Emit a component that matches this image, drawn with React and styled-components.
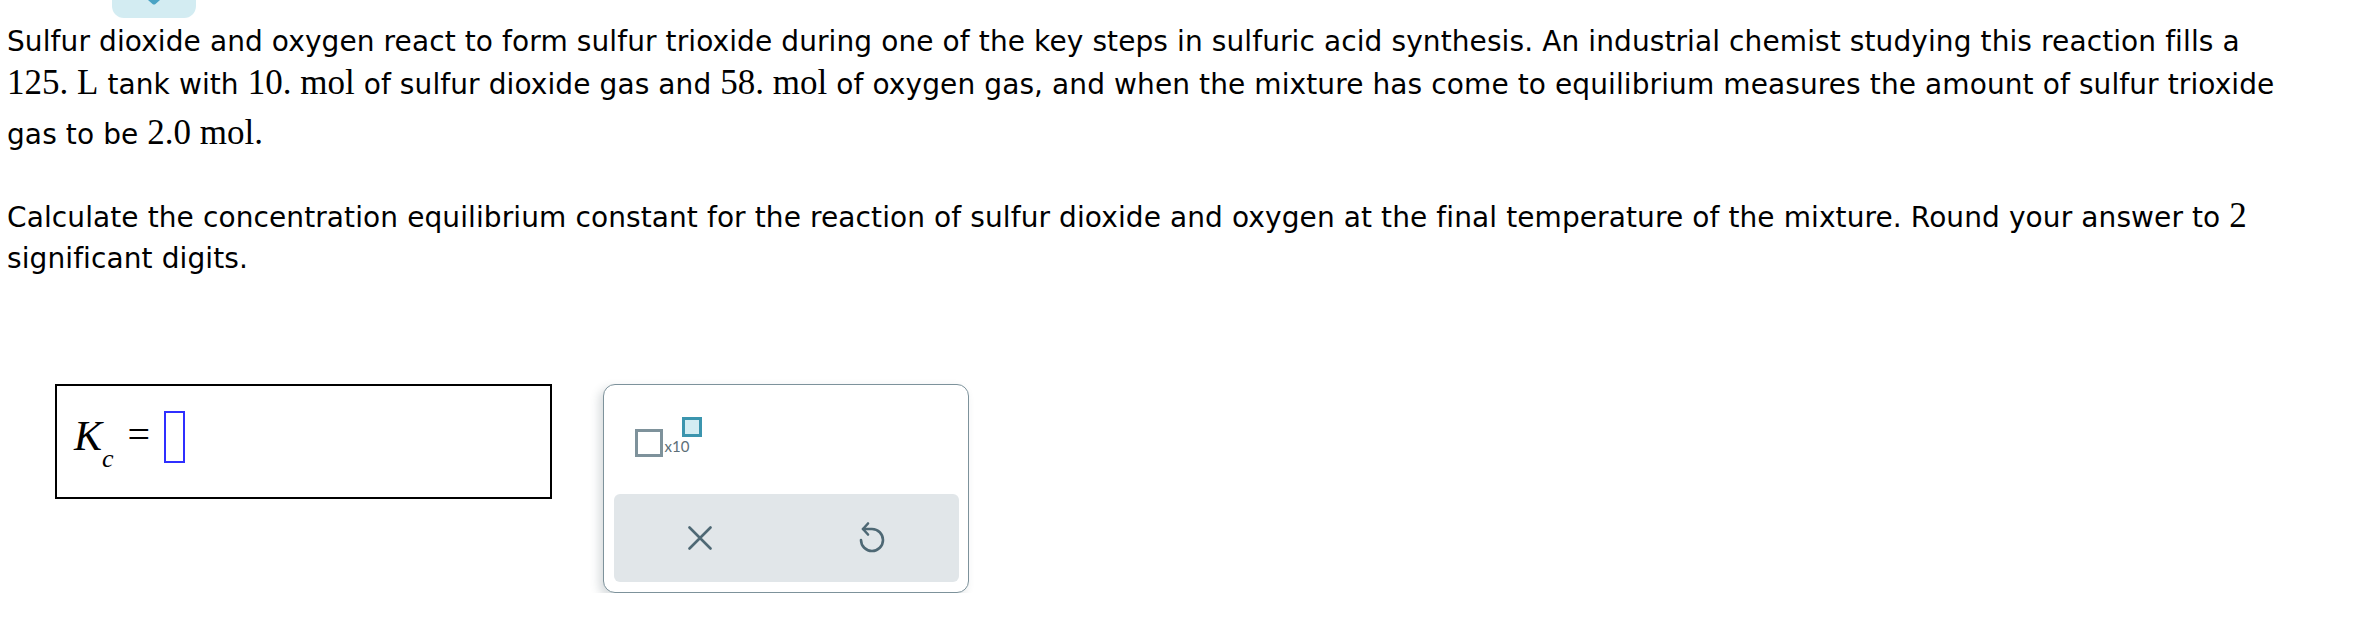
import React from "react";
import styled, { createGlobalStyle } from "styled-components";

const Global = createGlobalStyle`
  html, body {
    margin: 0;
    padding: 0;
    background: #fff;
  }
  body {
    font-family: "DejaVu Sans", Verdana, sans-serif;
    color: #000;
  }
`;

const Page = styled.div`
  padding: 0 0 0 7px;
`;

const TopTab = styled.div`
  width: 84px;
  height: 18px;
  margin-left: 105px;
  background: #d3ecf2;
  border-radius: 0 0 12px 12px;
  display: flex;
  justify-content: center;
  align-items: flex-start;
`;

const Prompt = styled.div`
  font-size: 28px;
  line-height: 41px;
  letter-spacing: 0.1px;
  margin-top: ${(p) => p.$top}px;
`;

const Line = styled.div`
  white-space: nowrap;
  padding-top: ${(p) => p.$extra || 0}px;
`;

const M = styled.span`
  font-family: "Liberation Serif", "Times New Roman", serif;
  font-size: 35px;
  letter-spacing: 0;
`;

const Work = styled.div`
  display: flex;
  align-items: flex-start;
  gap: 51px;
  margin-top: 105px;
  padding-left: 48px;
`;

const AnswerBox = styled.div`
  box-sizing: border-box;
  width: 497px;
  height: 115px;
  border: 2px solid #000;
  display: flex;
  align-items: flex-start;
  padding: 25px 0 0 17px;
  font-family: "Liberation Serif", "Times New Roman", serif;
`;

const Var = styled.span`
  font-style: italic;
  font-size: 42px;
  line-height: 1;
  margin-top: 4px;
  white-space: nowrap;
`;

const Sub = styled.span`
  font-size: 26px;
  vertical-align: -17px;
`;

const Eq = styled.span`
  font-size: 40px;
  line-height: 1;
  margin: 4px 0 0 14px;
`;

const Slot = styled.span`
  box-sizing: border-box;
  width: 21px;
  height: 52px;
  border: 2px solid #2f2fff;
  margin-left: 14px;
`;

const Panel = styled.div`
  box-sizing: border-box;
  width: 366px;
  height: 209px;
  border: 1.5px solid #7d929b;
  border-radius: 12px;
  background: #fff;
  box-shadow: -4px 4px 10px rgba(60, 80, 90, 0.2);
  display: flex;
  flex-direction: column;
  padding: 0 9.5px 10.5px;
`;

const PanelTop = styled.div`
  flex: 1;
  padding: 31.5px 0 0 21px;
`;

const SciButton = styled.div`
  display: flex;
  align-items: flex-start;
  font-family: "Lato", "Open Sans", sans-serif;
`;

const BigSquare = styled.span`
  box-sizing: border-box;
  width: 28px;
  height: 28px;
  border: 3px solid #7e929b;
  margin-top: 12px;
`;

const Times = styled.span`
  font-size: 15px;
  color: #5c6f78;
  margin: 22px 0 0 2px;
  line-height: 1;
`;

const SmallSquare = styled.span`
  box-sizing: border-box;
  width: 20px;
  height: 20px;
  border: 3px solid #3b95ae;
  background: #d3edf3;
  margin-left: -7px;
`;

const Footer = styled.div`
  height: 88px;
  background: #e1e6e9;
  border-radius: 6px;
  display: grid;
  grid-template-columns: 1fr 1fr;
`;

const Action = styled.div`
  display: flex;
  align-items: center;
  justify-content: center;
  color: #4e6874;
`;

export default function App() {
  return (
    <>
      <Global />
      <Page>
        <TopTab>
          <svg width="12" height="5" viewBox="0 0 12 5">
            <path d="M0 0 H12 L7.2 4.2 Q6 5 4.8 4.2 Z" fill="#4aa3c4" />
          </svg>
        </TopTab>
        <Prompt $top={3}>
          <Line>
            Sulfur dioxide and oxygen react to form sulfur trioxide during one of the key steps in sulfuric acid
            synthesis. An industrial chemist studying this reaction fills a
          </Line>
          <Line>
            <M>125. L</M> tank with <M>10. mol</M> of sulfur dioxide gas and <M>58. mol</M> of oxygen gas, and when
            the mixture has come to equilibrium measures the amount of sulfur trioxide
          </Line>
          <Line $extra={7}>
            gas to be <M>2.0 mol.</M>
          </Line>
        </Prompt>
        <Prompt $top={40}>
          <Line>
            Calculate the concentration equilibrium constant for the reaction of sulfur dioxide and oxygen at the
            final temperature of the mixture. Round your answer to <M>2</M>
          </Line>
          <Line>significant digits.</Line>
        </Prompt>
        <Work>
          <AnswerBox>
            <Var>
              K<Sub>c</Sub>
            </Var>
            <Eq>=</Eq>
            <Slot />
          </AnswerBox>
          <Panel>
            <PanelTop>
              <SciButton>
                <BigSquare />
                <Times>x10</Times>
                <SmallSquare />
              </SciButton>
            </PanelTop>
            <Footer>
              <Action>
                <svg width="24" height="24" viewBox="0 0 24 24" fill="none" stroke="currentColor"
                  strokeWidth="2.6" strokeLinecap="round">
                  <path d="M1.5 1.5 L22.5 22.5 M22.5 1.5 L1.5 22.5" />
                </svg>
              </Action>
              <Action>
                <svg width="26" height="33" viewBox="0 0 26 33" fill="none" stroke="currentColor"
                  strokeWidth="2.6" strokeLinecap="round" strokeLinejoin="round">
                  <path d="M9 2.5 L4 8 L9 13.5" />
                  <path d="M4 8 H13 A11 11 0 1 1 2 19" />
                </svg>
              </Action>
            </Footer>
          </Panel>
        </Work>
      </Page>
    </>
  );
}
